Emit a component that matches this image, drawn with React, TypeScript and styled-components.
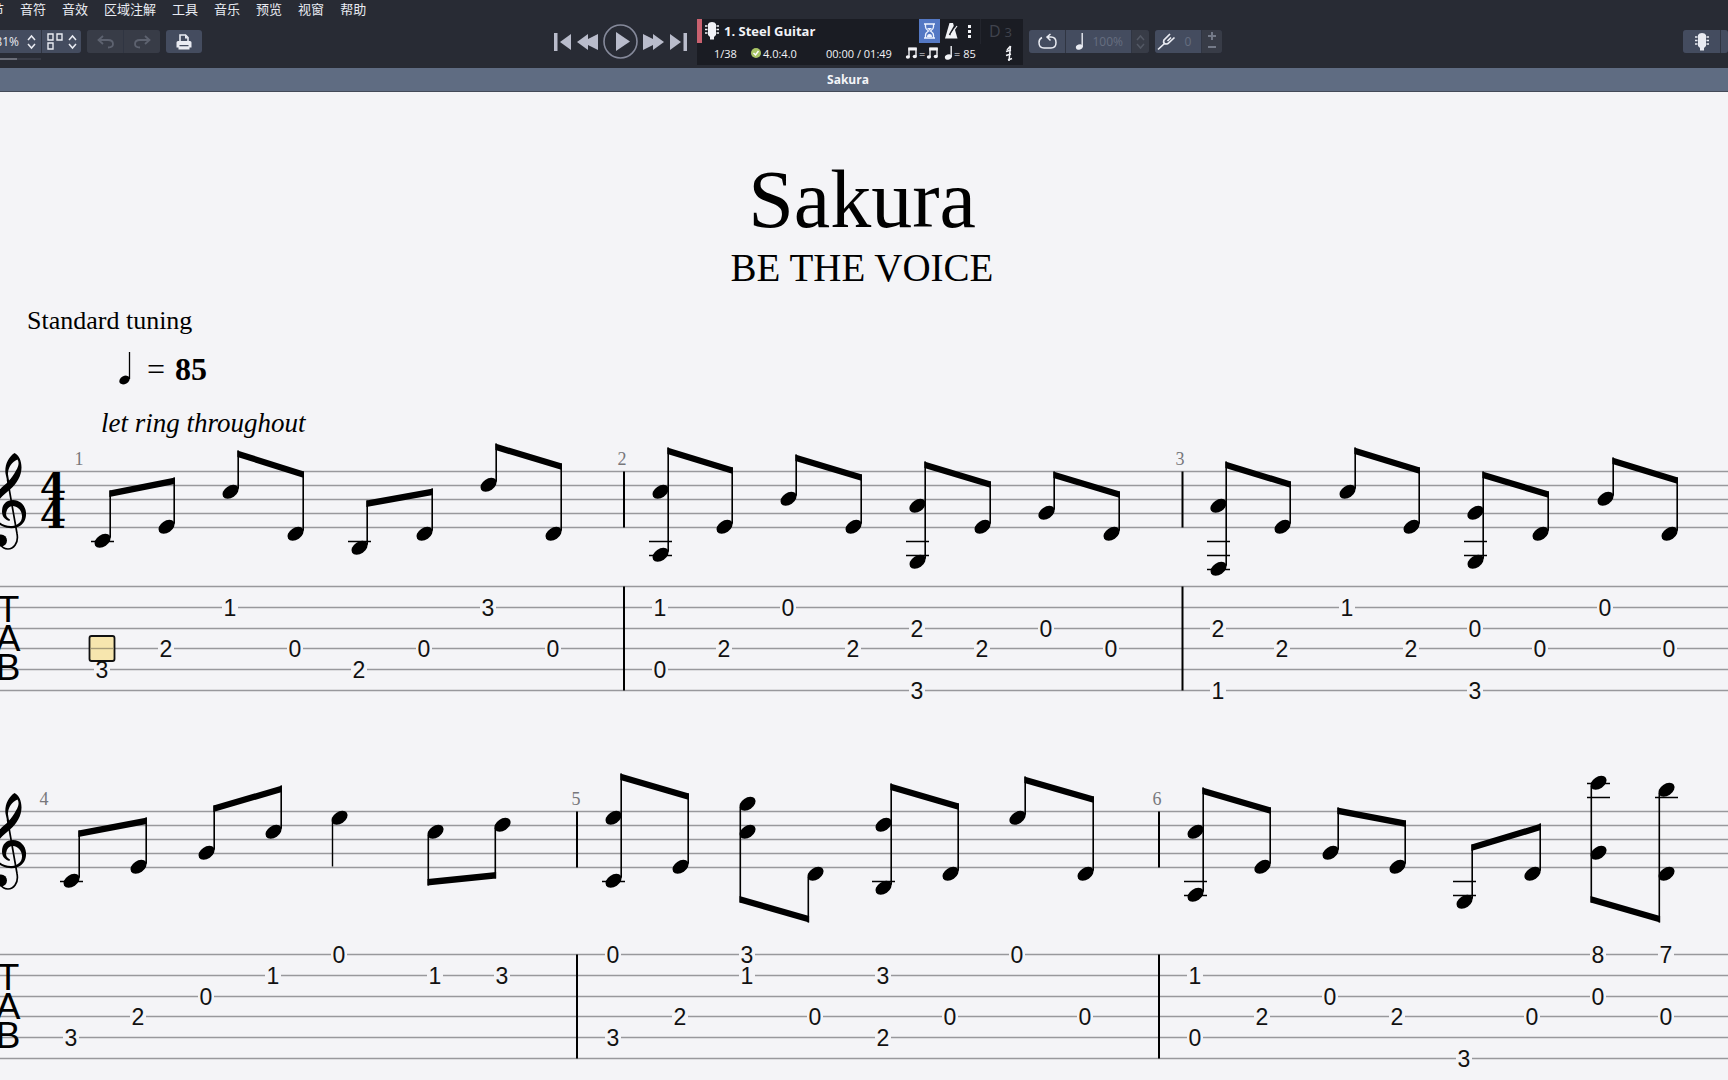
import React from "react";
import styled, { createGlobalStyle } from "styled-components";

const GlobalStyle = createGlobalStyle`
  * { box-sizing: border-box; }
  body { margin: 0; background: #f4f4f7; overflow: hidden; }
  button, select, input { font: inherit; color: inherit; border: 0; margin: 0; padding: 0; background: none; }
  svg { display: block; flex: none; overflow: visible; }
`;

const serif = `"Liberation Serif", "Times New Roman", serif`;
const sans = `"Liberation Sans", Arial, sans-serif`;
const ui = `"Open Sans", "Noto Sans", "Noto Sans CJK SC", sans-serif`;

/* ---------- shell ---------- */

const Shell = styled.div`
  display: flex;
  flex-direction: column;
  height: 100vh;
  overflow: hidden;
  font-family: ${ui};
`;

const Header = styled.header`
  flex: none;
  background: #282b34;
  color: #e9ebf2;
  padding-bottom: 3px;
`;

const Menu = styled.nav`
  display: flex;
  gap: 16px;
  height: 18px;
  margin-left: -22px;
`;

const MenuItem = styled.button`
  flex: none;
  font-family: "Noto Sans CJK SC", sans-serif;
  font-size: 13px;
  line-height: 18px;
  white-space: nowrap;
`;

const Toolbar = styled.div`
  display: grid;
  grid-template-columns: 1fr auto 1fr;
  align-items: center;
  height: 47px;
`;

const LeftTools = styled.div`
  display: flex;
  align-items: center;
  gap: 6px;
  margin-left: -29px;
`;

const CenterTools = styled.div`
  display: flex;
  align-items: center;
  gap: 6px;
  margin-left: 48px;
`;

const RightTools = styled.div`
  display: flex;
  justify-content: flex-end;
`;

const Group = styled.div<{ $dim?: boolean }>`
  display: flex;
  gap: 1px;
  height: 23px;
  border-radius: 3px;
  overflow: hidden;
  background: #303542;
  color: ${(p) => (p.$dim ? "#5d626f" : "#e9ebf2")};
`;

const Cell = styled.button<{ $w: number; $dim?: boolean }>`
  display: flex;
  align-items: center;
  justify-content: center;
  gap: 5px;
  width: ${(p) => p.$w}px;
  height: 23px;
  background: ${(p) => (p.$dim ? "#383c47" : "#444c5f")};
`;

const Field = styled.label<{ $w: number; $pad: number }>`
  display: flex;
  align-items: center;
  justify-content: flex-end;
  gap: 8px;
  width: ${(p) => p.$w}px;
  height: 23px;
  padding-right: ${(p) => p.$pad}px;
  background: #444c5f;
  font-size: 12px;
`;

const Select = styled.select<{ $dim?: boolean }>`
  appearance: none;
  width: 32px;
  text-align-last: right;
  color: ${(p) => (p.$dim ? "#666e80" : "#e9ebf2")};
`;

const NumberBox = styled.input`
  width: 10px;
  text-align: center;
  color: #666e80;
`;

const Steppers = styled.div`
  display: flex;
  flex-direction: column;
`;

const Step = styled.button`
  display: flex;
  align-items: center;
  justify-content: center;
  width: 20px;
  height: 12px;
  background: #383c47;
  color: #747a88;
`;

const ZoomStack = styled.div`
  display: flex;
  flex-direction: column;
  gap: 5px;
  padding-top: 7px;
`;

const ZoomTrack = styled.div`
  width: 70px;
  height: 2px;
  background: #373a45;
`;

const ZoomFill = styled.div`
  width: 46px;
  height: 2px;
  background: #6a6d78;
`;

const Transport = styled.div`
  display: flex;
  align-items: center;
  gap: 6px;
  margin-right: 4px;
  color: #b9bccb;
`;

const IconButton = styled.button`
  display: block;
`;

/* ---------- track display ---------- */

const Display = styled.section`
  width: 326px;
  padding-bottom: 2px;
  background: #1a1c23;
  color: #f2f3f7;
`;

const DisplayRow = styled.div<{ $h: number }>`
  display: flex;
  align-items: center;
  height: ${(p) => p.$h}px;
`;

const TrackColor = styled.span`
  width: 5px;
  height: 24px;
  margin-right: 3px;
  background: #c9616f;
`;

const TrackName = styled.button`
  flex: 1;
  padding-left: 5px;
  text-align: left;
  font-size: 13px;
  font-weight: 700;
`;

const TrackActions = styled.div`
  display: flex;
  align-items: center;
  gap: 10px;
`;

const Hourglass = styled.button`
  display: flex;
  align-items: center;
  justify-content: center;
  width: 21px;
  height: 24px;
  margin-right: 5px;
  background: #5478c4;
`;

const Chord = styled.div`
  display: flex;
  align-items: baseline;
  gap: 4px;
  width: 43px;
  margin-left: 9px;
  padding-left: 8px;
  border-left: 1px solid #23252d;
  font-size: 16px;
  line-height: 24px;
  color: #40434d;
`;

const ChordNumber = styled.span`
  font-size: 13px;
`;

const Status = styled(DisplayRow)`
  padding-left: 17px;
`;

const Slot = styled.span<{ $w: number }>`
  display: flex;
  align-items: center;
  gap: 2px;
  width: ${(p) => p.$w}px;
  font-size: 11px;
  white-space: nowrap;
`;

const TabBar = styled.div`
  flex: none;
  height: 24px;
  padding-top: 1px;
  padding-right: 32px;
  border-bottom: 1px solid #434a58;
  background: #5f6c82;
  color: #f4f5f8;
  font-size: 12px;
  font-weight: 700;
  line-height: 22px;
  text-align: center;
`;

/* ---------- score ---------- */

const Score = styled.main`
  flex: 1;
  min-height: 0;
  overflow: hidden;
  padding-top: 62px;
  background: #f4f4f7;
  color: #000;
  font-family: ${serif};
`;

const Heading = styled.div`
  padding-right: 4px;
  margin-bottom: 16px;
  text-align: center;
`;

const Title = styled.h1`
  margin: 0;
  font-size: 82px;
  font-weight: 400;
  line-height: 92px;
`;

const Artist = styled.h2`
  margin: 0;
  font-size: 39px;
  font-weight: 400;
  line-height: 44px;
`;

const Tuning = styled.p`
  margin: 0 0 15px;
  padding-left: 27px;
  font-size: 26px;
  line-height: 30px;
`;

const Tempo = styled.p`
  display: flex;
  gap: 10px;
  margin: 0 0 21px;
  padding-left: 118px;
  font-size: 32px;
  line-height: 36px;
`;

const Direction = styled.p`
  height: 29px;
  margin: 0;
  padding-left: 101px;
  font-size: 27px;
  font-style: italic;
  line-height: 30px;
`;

const SystemDrawing = styled.svg`
  width: 100%;
  margin-bottom: 80px;

  text { text-anchor: middle; }
  .fret { font: 23px ${sans}; fill: #111; }
  .clef { font: 37px ${sans}; }
  .time { font: bold 38px "DejaVu Serif", ${serif}; }
  .measure { font: 18px ${serif}; fill: #77777b; }
`;

/* Steps count down from the top staff line (F5 = 0), one per half space. */
type Note = { x: number; steps: number[]; frets: [number, number][] };
type Beam = { from: number; to: number; y1: number; y2: number; down?: boolean };
type System = {
  tabTop: number;
  height: number;
  bars: number[];
  numbers: [number, number][];
  notes: Note[];
  beams: Beam[];
  single?: number;
  time?: boolean;
  cursor?: boolean;
};

const TOP = 34.5;
const n = (x: number, steps: number[], ...frets: [number, number][]): Note => ({ x, steps, frets });
const b = (from: number, y1: number, y2: number, down = false): Beam => ({ from, to: from + 1, y1, y2, down });

const first: System = {
  tabTop: 115,
  height: 260,
  bars: [624, 1182.5],
  numbers: [[79, 1], [622, 2], [1180, 3]],
  time: true,
  cursor: true,
  notes: [
    n(102, [10], [5, 3]), n(166, [8], [4, 2]), n(230, [3], [2, 1]), n(295, [9], [4, 0]),
    n(359, [11], [5, 2]), n(424, [9], [4, 0]), n(488, [2], [2, 3]), n(553, [9], [4, 0]),
    n(660, [3, 12], [2, 1], [5, 0]), n(724, [8], [4, 2]), n(788, [4], [2, 0]), n(853, [8], [4, 2]),
    n(917, [5, 13], [3, 2], [6, 3]), n(982, [8], [4, 2]), n(1046, [6], [3, 0]), n(1111, [9], [4, 0]),
    n(1218, [5, 14], [3, 2], [6, 1]), n(1282, [8], [4, 2]), n(1347, [3], [2, 1]), n(1411, [8], [4, 2]),
    n(1475, [6, 13], [3, 0], [6, 3]), n(1540, [9], [4, 0]), n(1605, [4], [2, 0]), n(1669, [9], [4, 0]),
  ],
  beams: [
    b(0, 19, 6), b(2, -21, 0), b(4, 29, 17), b(6, -28, -8),
    b(8, -24, -4), b(10, -17, 3), b(12, -10, 10), b(14, 0, 20),
    b(16, -10, 10), b(18, -24, -4), b(20, 0, 20), b(22, -14, 6),
  ],
};

const second: System = {
  tabTop: 143,
  height: 288,
  bars: [577, 1159],
  numbers: [[44, 4], [576, 5], [1157, 6]],
  single: 4,
  notes: [
    n(71, [10], [5, 3]), n(138, [8], [4, 2]), n(206, [6], [3, 0]), n(273, [3], [2, 1]),
    n(339, [1], [1, 0]), n(435, [3], [2, 1]), n(502, [2], [2, 3]),
    n(613, [1, 10], [1, 0], [5, 3]), n(680, [8], [4, 2]), n(747, [-1, 3], [1, 3], [2, 1]), n(815, [9], [4, 0]),
    n(883, [2, 11], [2, 3], [5, 2]), n(950, [9], [4, 0]), n(1017, [1], [1, 0]), n(1085, [9], [4, 0]),
    n(1195, [3, 12], [2, 1], [5, 0]), n(1262, [8], [4, 2]), n(1330, [6], [3, 0]), n(1397, [8], [4, 2]),
    n(1464, [13], [6, 3]), n(1532, [9], [4, 0]), n(1598, [-4, 6], [1, 8], [3, 0]), n(1666, [-3, 9], [1, 7], [4, 0]),
  ],
  beams: [
    b(0, 19, 6), b(2, -6, -26), b(5, 74, 67, true),
    b(7, -38, -18), b(9, 91, 111, true), b(11, -28, -8), b(13, -35, -15),
    b(15, -24, -4), b(17, -4, 9), b(19, 33, 12), b(21, 91, 111, true),
  ],
};

const stepY = (s: number) => TOP + s * 7 - 0.7;

const ledgerSteps = (steps: number[]) => {
  const out: number[] = [];
  for (let s = 10; s <= Math.max(...steps); s += 2) out.push(s);
  for (let s = -2; s >= Math.min(...steps); s -= 2) out.push(s);
  return out;
};

const stringY = (tabTop: number, s: number) => TOP + tabTop + Math.round((s - 1) * 20.8);

function Clef() {
  return (
    <g transform={`translate(0 ${TOP})`}>
      <path
        fillRule="evenodd"
        d="M14.5-18.5C8-14 4.500-6 5.500 2L7.500 11C3 15-4 20-7 28C-11 38-8 50 2 54.500C7 57 13 57.500 18 55.500C24 53 26.500 47 26 41C25.500 34 20 28.500 13 28.500C6 28.500 2 33 2 40C2 45 5 48.500 9.500 49.500L10 48C6 46 5.500 43 6.500 40C7.500 36 10 34.500 13 34.500C18 35 22 39 22 45C22 51 17 54 12 54.500C2 55-5 49-5 40C-5 30 3 24 10 18C17 12 21.500 4 21.500-4C21.500-11 19-16 14.500-18.500ZM17.500-12C19.500-9 18.500-5 16-1C14 3 11 7 9 9L8 3C7.500-3 12-10 17.500-12Z"
      />
      <path d="M7.500 8L17 62C19 72 13 77.500 8 77.500C4 77.500 1 75 0 71" fill="none" stroke="#000" strokeWidth="1.7" />
      <circle cx="1" cy="69" r="6" />
    </g>
  );
}

function SystemView({ data }: { data: System }) {
  const { tabTop, notes } = data;
  const strings = [1, 2, 3, 4, 5, 6];
  return (
    <SystemDrawing height={data.height}>
      <g stroke="#98989c" strokeWidth="1.4">
        {[0, 2, 4, 6, 8].map((s) => (
          <line key={s} x1="0" x2="100%" y1={TOP + s * 7} y2={TOP + s * 7} />
        ))}
        {strings.map((s) => (
          <line key={s} x1="0" x2="100%" y1={stringY(tabTop, s)} y2={stringY(tabTop, s)} />
        ))}
      </g>
      {data.bars.map((x) => (
        <path key={x} d={`M${x} ${TOP}v56M${x} ${TOP + tabTop}v104`} stroke="#000" strokeWidth="2" />
      ))}
      {data.numbers.map(([x, v]) => (
        <text key={v} className="measure" x={x} y={TOP - 7}>{v}</text>
      ))}
      <Clef />
      {data.time && (
        <g className="time">
          <text x="53" y={TOP + 28}>4</text>
          <text x="53" y={TOP + 56}>4</text>
        </g>
      )}
      {["T", "A", "B"].map((c, i) => (
        <text key={c} className="clef" x="8" y={TOP + tabTop + 35 + i * 29}>{c}</text>
      ))}
      {notes.map((note) => (
        <g key={note.x}>
          {ledgerSteps(note.steps).map((s) => (
            <line key={s} x1={note.x - 11} x2={note.x + 12} y1={TOP + s * 7} y2={TOP + s * 7} stroke="#000" strokeWidth="1.5" />
          ))}
          {note.steps.map((s) => (
            <ellipse key={s} rx="8.9" ry="5.9" transform={`translate(${note.x + 0.5} ${stepY(s)}) rotate(-34)`} />
          ))}
          {note.frets.map(([s, f]) => (
            <g key={s}>
              <rect x={note.x - 8} y={stringY(tabTop, s) - 9} width="16" height="18" fill="#f4f4f7" />
              <text className="fret" x={note.x} y={stringY(tabTop, s) + 8}>{f}</text>
            </g>
          ))}
        </g>
      ))}
      {data.beams.map((beam) => {
        const a = notes[beam.from];
        const z = notes[beam.to];
        const dx = beam.down ? -6.7 : 8.2;
        const x1 = a.x + dx;
        const x2 = z.x + dx;
        const y1 = TOP + beam.y1;
        const y2 = TOP + beam.y2;
        const t = beam.down ? -6.5 : 6.5;
        const end = (note: Note) =>
          beam.down ? stepY(Math.min(...note.steps)) + 3 : stepY(Math.max(...note.steps)) - 3;
        return (
          <g key={beam.from}>
            <path d={`M${x1} ${y1}V${end(a)}M${x2} ${y2}V${end(z)}`} stroke="#000" strokeWidth="1.6" />
            <path d={`M${x1 - 0.8} ${y1}L${x2 + 0.8} ${y2}v${t}L${x1 - 0.8} ${y1 + t}Z`} />
          </g>
        );
      })}
      {data.single !== undefined && (
        <path d={`M${notes[data.single].x - 6.5} ${stepY(1) + 3}V${TOP + 55}`} stroke="#000" strokeWidth="1.4" />
      )}
      {data.cursor && (
        <g>
          <rect x="89.500" y={stringY(tabTop, 4) - 12.5} width="25" height="25" rx="2" fill="#f7e6ae" stroke="#111" strokeWidth="1.800" />
          <path d={`M91 ${stringY(tabTop, 4)}h22`} stroke="#a89c78" strokeWidth="1.4" />
        </g>
      )}
    </SystemDrawing>
  );
}

/* ---------- icons ---------- */

const Chevrons = ({ color = "currentColor" }: { color?: string }) => (
  <svg width="9" height="14" viewBox="0 0 9 14" fill="none" stroke={color} strokeWidth="1.500">
    <path d="M1 5L4.500 1L8 5M1 9L4.500 13L8 9" />
  </svg>
);

const LayoutIcon = () => (
  <svg width="16" height="17" viewBox="0 0 16 17" fill="none" stroke="currentColor" strokeWidth="1.400">
    <path d="M1 1H6V7H1ZM10 1H15V7H10ZM1 10H6V16H1Z" />
  </svg>
);

const UndoIcon = ({ flip }: { flip?: boolean }) => (
  <svg width="17" height="14" viewBox="0 0 17 14" fill="none" stroke="currentColor" strokeWidth="1.800">
    <path transform={flip ? "matrix(-1 0 0 1 17 0)" : undefined} d="M6 1L1.500 5L6 9M2 5H11C14.500 5 16 7 16 9C16 11.500 14 12.500 11 12.500" />
  </svg>
);

const PrintIcon = () => (
  <svg width="16" height="16" viewBox="0 0 16 16">
    <path d="M4 7V1H9.500L12 3.500V7" fill="none" stroke="currentColor" strokeWidth="1.600" />
    <path fill="currentColor" d="M9 1V4.500H12ZM2 7H14Q15.500 7 15.500 8.500V13.500H13.500V15.500H2.500V13.500H.5V8.500Q.5 7 2 7Z" />
    <path d="M3.500 11.700H12.500" stroke="#444c5f" strokeWidth="1.200" />
  </svg>
);

const SkipIcon = ({ flip }: { flip?: boolean }) => (
  <svg width="17" height="18" viewBox="0 0 17 18" fill="currentColor">
    <path transform={flip ? "matrix(-1 0 0 1 17 0)" : undefined} d="M0 0H3.500V18H0ZM17 1V17L6 9Z" />
  </svg>
);

const SeekIcon = ({ flip }: { flip?: boolean }) => (
  <svg width="21" height="16" viewBox="0 0 21 16" fill="currentColor">
    <path transform={flip ? "matrix(-1 0 0 1 21 0)" : undefined} d="M11 0V5L21 0V16L11 11V16L0 8Z" />
  </svg>
);

const PlayIcon = () => (
  <svg width="33" height="35" viewBox="0 0 33 35">
    <circle cx="16.500" cy="17.500" r="16.500" fill="none" stroke="#85899a" strokeWidth="1.600" />
    <path d="M12 8L26 17.500L12 27Z" fill="currentColor" />
  </svg>
);

const HeadstockIcon = () => (
  <svg width="14" height="18" viewBox="0 0 14 18">
    <path d="M3 2Q4 0 7 0T11 2V13L9 15V17.500H5V15L3 13Z" fill="currentColor" />
    <path d="M0 4H2.500M0 7.500H2.500M0 11H2.500M11.500 4H14M11.500 7.500H14M11.500 11H14" stroke="currentColor" strokeWidth="1.500" />
  </svg>
);

const HourglassIcon = () => (
  <svg width="11" height="16" viewBox="0 0 11 16" fill="none" stroke="#eef3ff" strokeWidth="1.300">
    <path d="M0 1H11M0 15H11M1.500 1V4Q1.500 6 4.500 8Q1.500 10 1.500 12V15M9.500 1V4Q9.500 6 6.500 8Q9.500 10 9.500 12V15" />
    <path d="M3 5H8L5.500 7.500ZM3 14Q3 11 5.500 11T8 14Z" fill="#eef3ff" stroke="none" />
  </svg>
);

const MetronomeIcon = () => (
  <svg width="13" height="16" viewBox="0 0 13 16">
    <path d="M4.500 0H8L12.500 15.500H0Z" fill="currentColor" />
    <path d="M4.500 12L10 2.500" stroke="#1a1c23" strokeWidth="1.600" />
    <path d="M6 11.500L12 3" stroke="currentColor" strokeWidth="1.200" />
  </svg>
);

const DotsIcon = () => (
  <svg width="3" height="13" viewBox="0 0 3 13" fill="currentColor">
    <path d="M0 0H3V3H0ZM0 5H3V8H0ZM0 10H3V13H0Z" />
  </svg>
);

const CheckIcon = () => (
  <svg width="10" height="10" viewBox="0 0 10 10">
    <circle cx="5" cy="5" r="5" fill="#a9c566" />
    <path d="M2.500 5L4.500 7L7.500 3" fill="none" stroke="#fff" strokeWidth="1.400" />
  </svg>
);

const EighthsIcon = () => (
  <svg width="11" height="12" viewBox="0 0 11 12">
    <path d="M3 10V1.500H10V9" fill="none" stroke="currentColor" strokeWidth="1.400" />
    <path d="M2.300 .5H10.700V3.500H2.300Z" fill="currentColor" />
    <ellipse cx="1.900" cy="10" rx="2.100" ry="1.700" fill="currentColor" />
    <ellipse cx="8.800" cy="9.500" rx="2.100" ry="1.700" fill="currentColor" />
  </svg>
);

const QuarterIcon = ({ h }: { h: number }) => (
  <svg width="7" height={h} viewBox={`0 0 7 ${h}`}>
    <path d={`M6.200 0V${h - 3}`} stroke="currentColor" strokeWidth="1.400" />
    <ellipse cx="3.300" cy={h - 3} rx="3.500" ry="2.600" transform={`rotate(-20 3.300 ${h - 3})`} fill="currentColor" />
  </svg>
);

const CountInIcon = () => (
  <svg width="6" height="15" viewBox="0 0 6 15" fill="none" stroke="currentColor">
    <path d="M4.500 0L3 15M1 4L4.500 0" strokeWidth="1.500" />
    <path d="M0 5.500L5 4M0 9.500L5 8M2 14L6 12.500" strokeWidth="1.700" />
  </svg>
);

const LoopIcon = () => (
  <svg width="19" height="15" viewBox="0 0 19 15" fill="none" stroke="currentColor" strokeWidth="1.500">
    <path d="M9 3H13Q18 3 18 8.500T13 14H6Q1 14 1 8.500Q1 5 4 3.500M12.500 0L9 3L12.500 6.500" />
  </svg>
);

const ForkIcon = () => (
  <svg width="17" height="17" viewBox="0 0 17 17" fill="none" stroke="currentColor" strokeWidth="1.700">
    <path d="M0 16.500L6.500 10.500M12 1L6 7Q5 9.500 6.500 10.500Q8 11.500 10 10.500L16.500 4.500M9.500 8L13 4.500" />
  </svg>
);

const TempoNote = () => (
  <svg width="19" height="36" viewBox="0 0 19 36">
    <path d="M11.500 1V28" stroke="#000" strokeWidth="1.300" />
    <ellipse rx="5.600" ry="3.900" transform="translate(6.500 29) rotate(-30)" />
  </svg>
);

const PlusIcon = () => (
  <svg width="8" height="8" stroke="currentColor" strokeWidth="2"><path d="M0 4H8M4 0V8" /></svg>
);

const MinusIcon = () => (
  <svg width="8" height="4" stroke="currentColor" strokeWidth="2"><path d="M0 2H8" /></svg>
);

const menuItems = ["小节", "音符", "音效", "区域注解", "工具", "音乐", "预览", "视窗", "帮助"];

export default function App() {
  return (
    <Shell>
      <GlobalStyle />
      <Header>
        <Menu>
          {menuItems.map((m) => (
            <MenuItem key={m}>{m}</MenuItem>
          ))}
        </Menu>
        <Toolbar>
          <LeftTools>
            <ZoomStack>
              <Group>
                <Field $w={70} $pad={5}>
                  <Select aria-label="Zoom" defaultValue="81%">
                    <option>81%</option>
                  </Select>
                  <Chevrons />
                </Field>
                <Cell $w={39} aria-label="Page layout">
                  <LayoutIcon />
                  <Chevrons />
                </Cell>
              </Group>
              <ZoomTrack>
                <ZoomFill />
              </ZoomTrack>
            </ZoomStack>
            <Group $dim>
              <Cell $w={36} $dim aria-label="Undo"><UndoIcon /></Cell>
              <Cell $w={36} $dim aria-label="Redo"><UndoIcon flip /></Cell>
            </Group>
            <Group>
              <Cell $w={36} aria-label="Print"><PrintIcon /></Cell>
            </Group>
          </LeftTools>

          <CenterTools>
            <Transport>
              <IconButton aria-label="Go to start"><SkipIcon /></IconButton>
              <IconButton aria-label="Rewind"><SeekIcon /></IconButton>
              <IconButton aria-label="Play"><PlayIcon /></IconButton>
              <IconButton aria-label="Forward"><SeekIcon flip /></IconButton>
              <IconButton aria-label="Go to end"><SkipIcon flip /></IconButton>
            </Transport>

            <Display>
              <DisplayRow $h={25}>
                <TrackColor />
                <HeadstockIcon />
                <TrackName>1. Steel Guitar</TrackName>
                <Hourglass aria-label="Countdown"><HourglassIcon /></Hourglass>
                <TrackActions>
                  <IconButton aria-label="Metronome"><MetronomeIcon /></IconButton>
                  <IconButton aria-label="More"><DotsIcon /></IconButton>
                </TrackActions>
                <Chord>
                  D<ChordNumber>3</ChordNumber>
                </Chord>
              </DisplayRow>
              <Status $h={19}>
                <Slot $w={37}>1/38</Slot>
                <Slot $w={75}><CheckIcon />4.0:4.0</Slot>
                <Slot $w={80}>00:00 / 01:49</Slot>
                <Slot $w={39}><EighthsIcon />=<EighthsIcon /></Slot>
                <Slot $w={61}><QuarterIcon h={14} />= 85</Slot>
                <CountInIcon />
              </Status>
            </Display>

            <Group>
              <Cell $w={36} aria-label="Loop"><LoopIcon /></Cell>
              <Field $w={65} $pad={8}>
                <QuarterIcon h={17} />
                <Select $dim aria-label="Speed" defaultValue="100%">
                  <option>100%</option>
                </Select>
              </Field>
              <Cell $w={17} $dim aria-label="Change speed"><Chevrons color="#535864" /></Cell>
            </Group>
            <Group>
              <Field $w={46} $pad={8}>
                <ForkIcon />
                <NumberBox aria-label="Transpose" defaultValue="0" />
              </Field>
              <Steppers>
                <Step aria-label="Raise"><PlusIcon /></Step>
                <Step aria-label="Lower"><MinusIcon /></Step>
              </Steppers>
            </Group>
          </CenterTools>

          <RightTools>
            <Group>
              <Cell $w={37} aria-label="Fretboard"><HeadstockIcon /></Cell>
              <Cell $w={7} aria-label="Keyboard" />
            </Group>
          </RightTools>
        </Toolbar>
      </Header>

      <TabBar>Sakura</TabBar>

      <Score>
        <Heading>
          <Title>Sakura</Title>
          <Artist>BE THE VOICE</Artist>
        </Heading>
        <Tuning>Standard tuning</Tuning>
        <Tempo>
          <TempoNote />
          <span>=</span>
          <b>85</b>
        </Tempo>
        <Direction>let ring throughout</Direction>
        <SystemView data={first} />
        <SystemView data={second} />
      </Score>
    </Shell>
  );
}
